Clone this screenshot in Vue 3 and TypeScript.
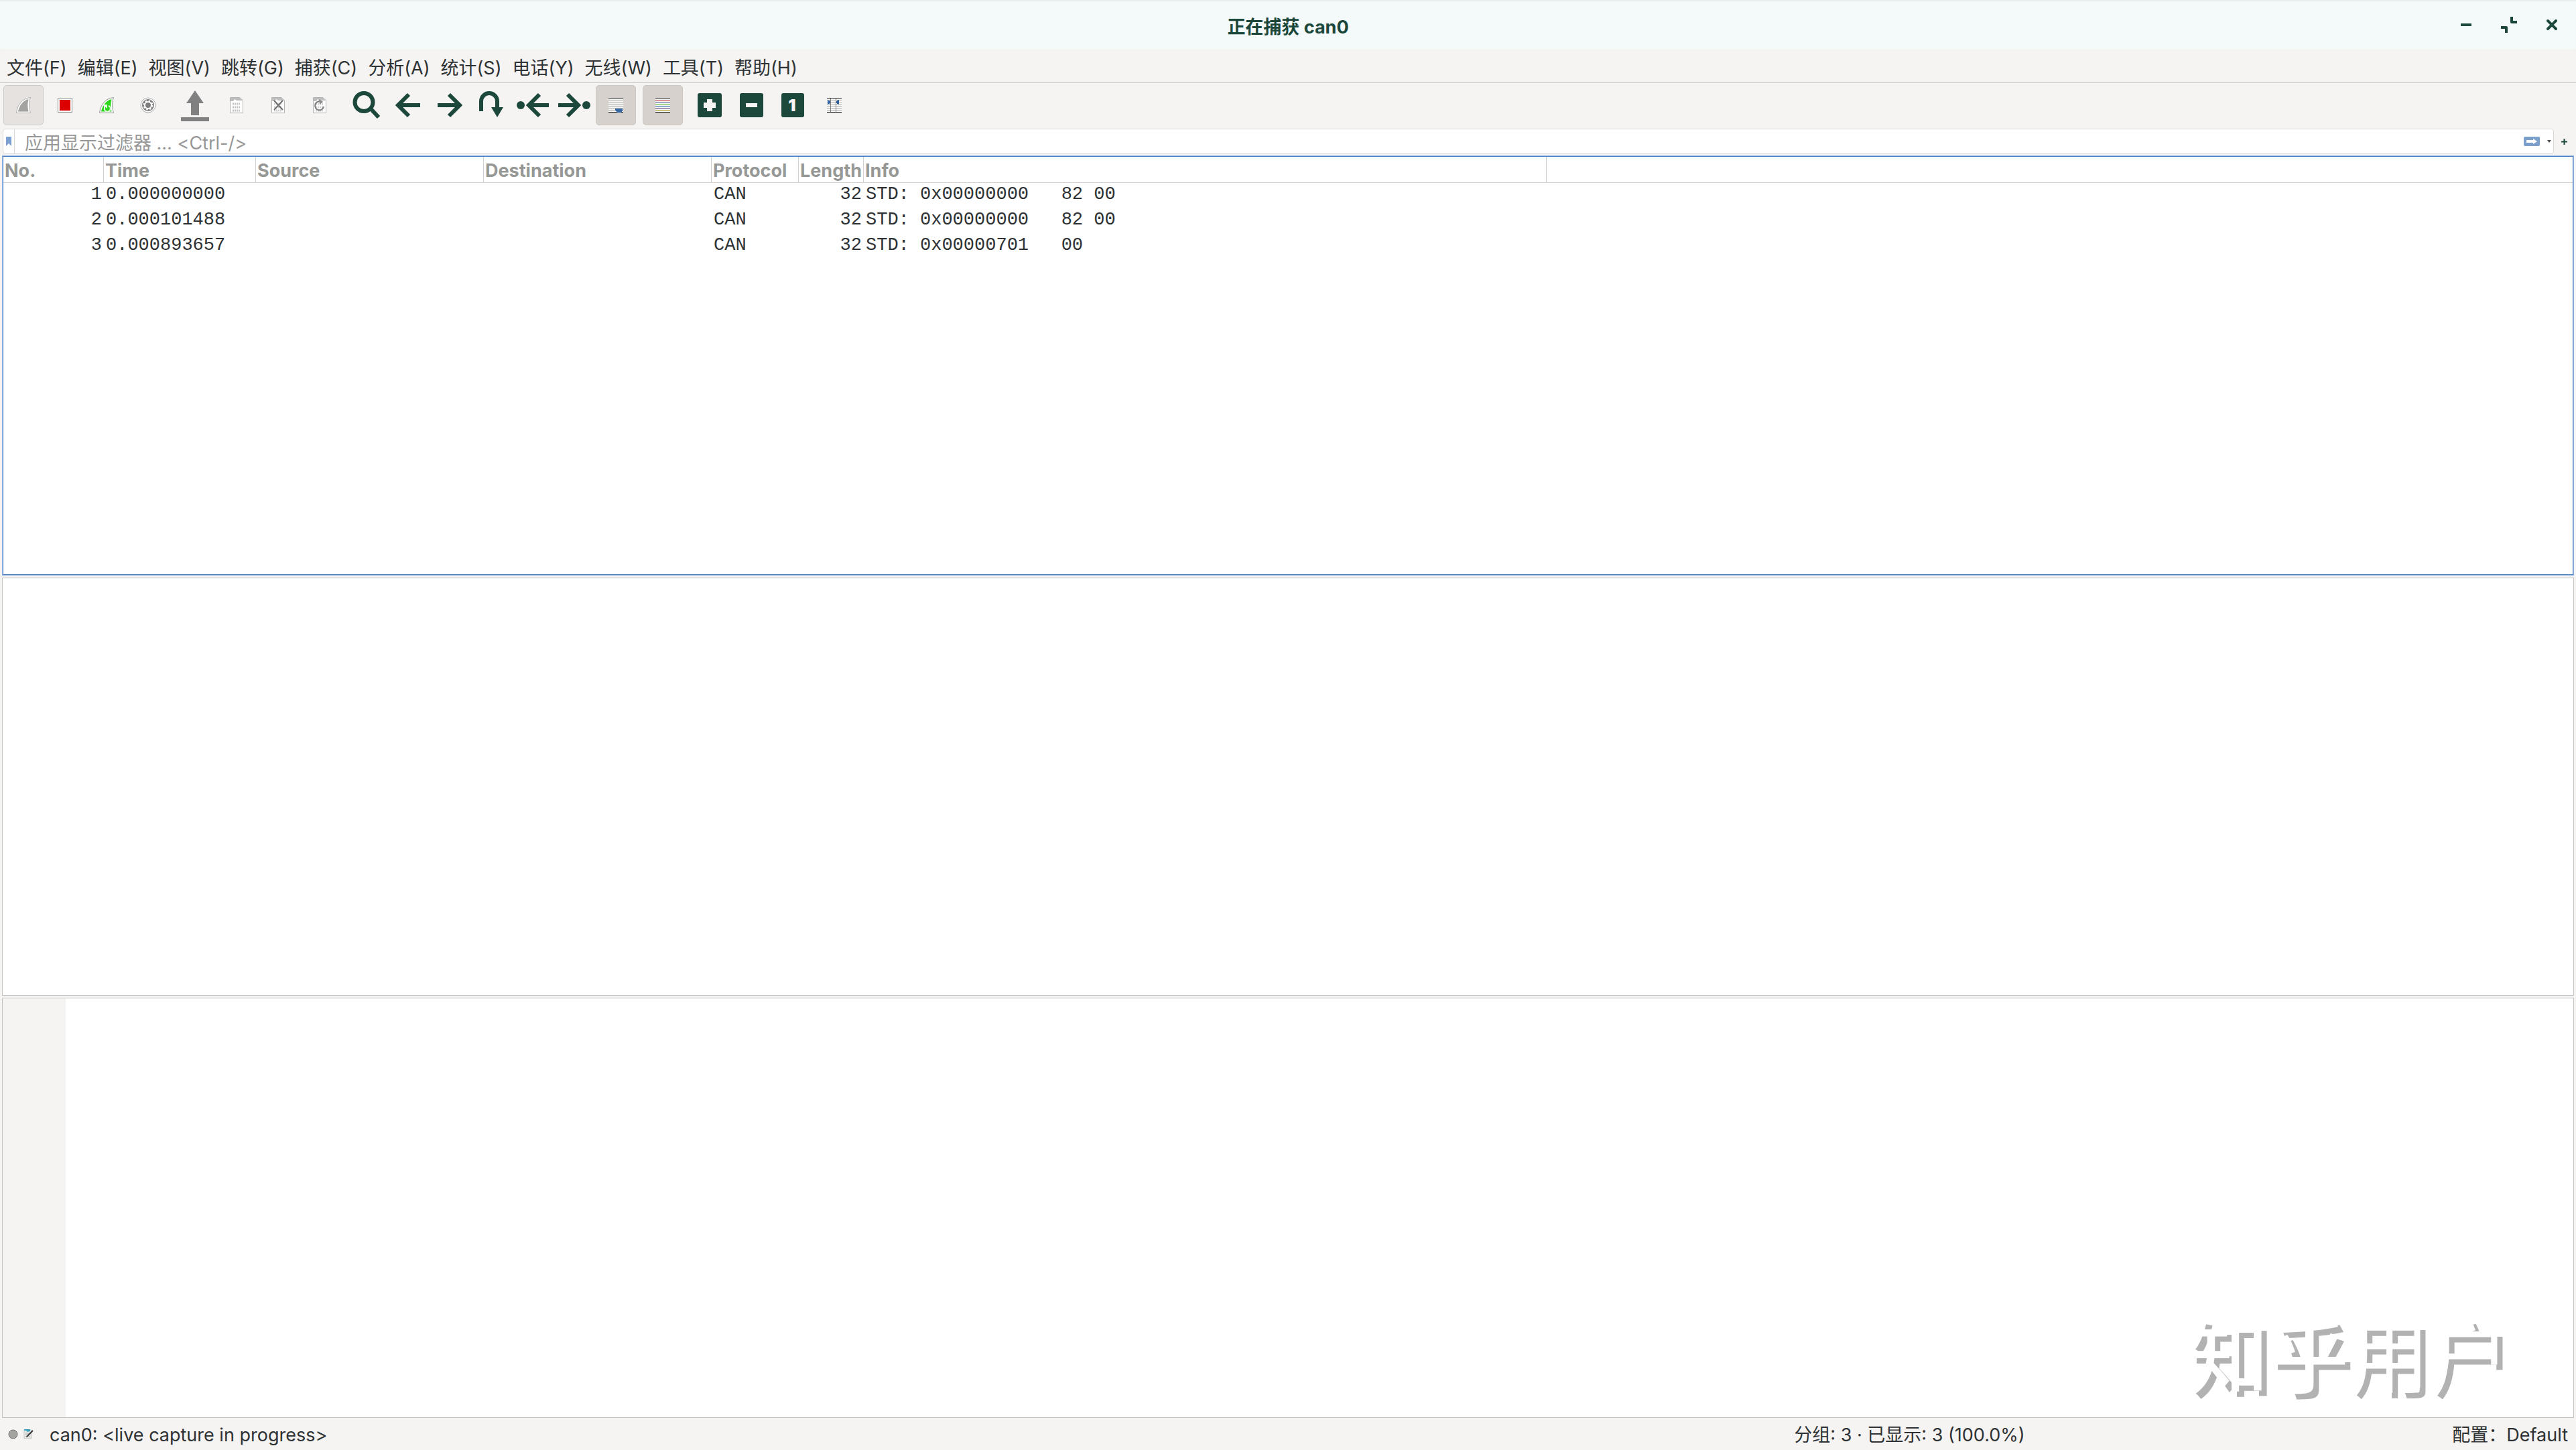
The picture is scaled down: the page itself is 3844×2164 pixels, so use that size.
<script setup lang="ts">
import { ref } from 'vue'

interface Packet {
  no: number
  time: string
  source: string
  destination: string
  protocol: string
  length: number
  info: string
}

const menus: string[] = [
  '文件(F)', '编辑(E)', '视图(V)', '跳转(G)', '捕获(C)', '分析(A)',
  '统计(S)', '电话(Y)', '无线(W)', '工具(T)', '帮助(H)',
]

const packets: Packet[] = [
  { no: 1, time: '0.000000000', source: '', destination: '', protocol: 'CAN', length: 32, info: 'STD: 0x00000000   82 00' },
  { no: 2, time: '0.000101488', source: '', destination: '', protocol: 'CAN', length: 32, info: 'STD: 0x00000000   82 00' },
  { no: 3, time: '0.000893657', source: '', destination: '', protocol: 'CAN', length: 32, info: 'STD: 0x00000701   00' },
]

const rowLines: number[] = [22, 25, 28, 31, 34, 37]
const colorLines: string[] = ['#c8373a', '#5566a0', '#62c03c', '#3f6fb5', '#6b5488', '#b5a032']
const filter = ref('')
</script>

<template>
  <div class="app">
    <header class="titlebar">
      <h1 class="title">正在捕获 can0</h1>
      <div class="window-buttons">
        <button class="win" aria-label="最小化">
          <svg viewBox="0 0 24 24"><path d="M4 12h16" stroke="#1c473b" stroke-width="4" /></svg>
        </button>
        <button class="win" aria-label="还原">
          <svg viewBox="0 0 24 24"><path d="M16 0v8h8M0 16h8v8" fill="none" stroke="#1c473b" stroke-width="4" stroke-linejoin="round" /></svg>
        </button>
        <button class="win" aria-label="关闭">
          <svg viewBox="0 0 24 24"><path d="M6 6l12 12M18 6L6 18" stroke="#1c473b" stroke-width="4" stroke-linecap="round" /></svg>
        </button>
      </div>
    </header>

    <nav class="menubar">
      <button v-for="m in menus" :key="m" class="menu">{{ m }}</button>
    </nav>

    <div class="toolbar">
      <div class="group">
        <button class="tool started" aria-label="开始捕获">
          <svg viewBox="0 0 60 60">
            <path d="M19.500 41.500C21 29 28 20 40.500 18.500C38 25 38 33 40.500 41.500Z" fill="#fff" stroke="#b0b0ae" />
            <path d="M22 39.500C24 30 29 23.500 37.500 21C36 27 36 33 37.500 39.500Z" fill="#a3a3a1" />
          </svg>
        </button>
        <button class="tool" aria-label="停止捕获">
          <svg viewBox="0 0 60 60">
            <rect x="19.500" y="19.500" width="21" height="21" fill="#fff" stroke="#8b8f8d" />
            <rect x="22" y="22" width="16" height="16" fill="#dc0000" />
          </svg>
        </button>
        <button class="tool" aria-label="重新开始捕获">
          <svg viewBox="0 0 60 60">
            <path d="M19.500 41.500C21 29 28 20 40.500 18.500C38 25 38 33 40.500 41.500Z" fill="#fff" stroke="#8f9b8d" />
            <path d="M22 39.500C24 30 29 23.500 37.500 21C36 27 36 33 37.500 39.500Z" fill="#2bd61b" />
            <path d="M27 30v4a4.500 4.500 0 1 0 6-3" fill="none" stroke="#e9fbe6" stroke-width="2" />
            <path d="M24 29h7v6z" fill="#e9fbe6" />
          </svg>
        </button>
        <button class="tool" aria-label="捕获选项">
          <svg viewBox="0 0 60 60">
            <circle cx="30" cy="30" r="11" fill="#fff" stroke="#a8a8a8" />
            <circle cx="30" cy="30" r="9" fill="#7d7d7d" />
            <circle cx="30" cy="30" r="5" fill="#7d7d7d" stroke="#fff" stroke-width="2" />
            <circle cx="30" cy="30" r="6.500" fill="none" stroke="#fff" stroke-width="2" stroke-dasharray="2.500 2.600" />
          </svg>
        </button>
      </div>
      <div class="group">
        <button class="tool" aria-label="打开">
          <svg viewBox="0 0 60 60"><path d="M30 8L43 27H36V45H24V27H17ZM9 48H51V54H9Z" fill="#808080" /></svg>
        </button>
        <button class="tool" aria-label="保存">
          <svg viewBox="0 0 60 60">
            <path d="M20.500 18.500H35L39.500 23V41.500H20.500Z" fill="#fff" stroke="#b4b4b4" />
            <path d="M21 19H35V23H30L27 21L25 24H21ZM35 19V23H39Z" fill="#bdbdbd" />
            <path d="M24 28H36M24 33H36M24 38H36" stroke="#c4c4c4" stroke-width="3" stroke-dasharray="2 1" />
          </svg>
        </button>
        <button class="tool" aria-label="关闭文件">
          <svg viewBox="0 0 60 60">
            <path d="M20.500 18.500H35L39.500 23V41.500H20.500Z" fill="#fff" stroke="#b4b4b4" />
            <path d="M21 19H35V23H30L27 21L25 24H21ZM35 19V23H39Z" fill="#bdbdbd" />
            <path d="M24 28H36M24 33H36M24 38H36" stroke="#d0d0d0" stroke-width="3" stroke-dasharray="2 1" />
            <path d="M24 23L37 37M37 23L24 37" stroke="#6e6e6e" stroke-width="2" />
          </svg>
        </button>
        <button class="tool" aria-label="重新加载">
          <svg viewBox="0 0 60 60">
            <path d="M20.500 18.500H35L39.500 23V41.500H20.500Z" fill="#fff" stroke="#b4b4b4" />
            <path d="M21 19H35V23H30L27 21L25 24H21ZM35 19V23H39Z" fill="#bdbdbd" />
            <path d="M24 28H36M24 33H36M24 38H36" stroke="#d0d0d0" stroke-width="3" stroke-dasharray="2 1" />
            <path d="M31 24.500A6.500 6.500 0 1 0 36 32" fill="none" stroke="#7c7c7c" stroke-width="2" />
            <path d="M29 21L35 25L30 29Z" fill="#8c8c8c" />
          </svg>
        </button>
      </div>
      <div class="group">
        <button class="tool" aria-label="查找">
          <svg viewBox="0 0 60 60" fill="none" stroke="#1c473b" stroke-width="6">
            <circle cx="26" cy="25.500" r="13.500" /><path d="M35 34L48 48" />
          </svg>
        </button>
        <button class="tool" aria-label="后退">
          <svg viewBox="0 0 60 60" fill="none" stroke="#1c473b" stroke-width="6"><path d="M48 30H16M31 14L15 30L31 46" /></svg>
        </button>
        <button class="tool" aria-label="前进">
          <svg viewBox="0 0 60 60" fill="none" stroke="#1c473b" stroke-width="6"><path d="M12 30H44M29 14L45 30L29 46" /></svg>
        </button>
        <button class="tool" aria-label="跳转到分组">
          <svg viewBox="0 0 60 60">
            <path d="M15 39V24A12 12 0 0 1 39 24V36" fill="none" stroke="#1c473b" stroke-width="6" />
            <path d="M30 33H48L39 48Z" fill="#1c473b" />
          </svg>
        </button>
        <button class="tool" aria-label="首个分组">
          <svg viewBox="0 0 60 60" fill="none" stroke="#1c473b" stroke-width="6">
            <path d="M54 30H26M40 14L24 30L40 46" /><circle cx="12" cy="30" r="6" fill="#1c473b" stroke="none" />
          </svg>
        </button>
        <button class="tool" aria-label="最后分组">
          <svg viewBox="0 0 60 60" fill="none" stroke="#1c473b" stroke-width="6">
            <path d="M6 30H34M20 14L36 30L20 46" /><circle cx="48" cy="30" r="6" fill="#1c473b" stroke="none" />
          </svg>
        </button>
        <button class="tool checked" aria-label="自动滚动">
          <svg viewBox="0 0 60 60" shape-rendering="crispEdges">
            <rect x="19" y="19" width="22" height="22" fill="#f4f4f2" />
            <rect v-for="y in rowLines" :key="y" x="19" :y="y" width="22" height="1" fill="#b4b6b2" />
            <path d="M19 19H41V20H19ZM19 40H41V41H19Z" fill="#1f1f1f" />
            <path d="M29 35H40V38L37 41H32L29 38Z" fill="#3465a4" />
          </svg>
        </button>
      </div>
      <div class="group">
        <button class="tool checked" aria-label="着色分组列表">
          <svg viewBox="0 0 60 60" shape-rendering="crispEdges">
            <rect x="19" y="19" width="22" height="22" fill="#f4f4f2" />
            <rect v-for="(c, i) in colorLines" :key="i" x="19" :y="22 + i * 3" width="22" height="1" :fill="c" />
            <path d="M19 19H41V20H19ZM19 40H41V41H19Z" fill="#1f1f1f" />
          </svg>
        </button>
      </div>
      <div class="group">
        <button class="tool" aria-label="放大">
          <svg viewBox="0 0 60 60">
            <rect x="12" y="12" width="36" height="36" rx="3" fill="#1c473b" />
            <path d="M26 21H34V26H39V34H34V39H26V34H21V26H26Z" fill="#f6f5f4" />
          </svg>
        </button>
        <button class="tool" aria-label="缩小">
          <svg viewBox="0 0 60 60">
            <rect x="13" y="12" width="35" height="36" rx="3" fill="#1c473b" />
            <rect x="22" y="27" width="17" height="6" fill="#f6f5f4" />
          </svg>
        </button>
        <button class="tool" aria-label="普通大小">
          <svg viewBox="0 0 60 60">
            <rect x="13" y="12" width="34" height="36" rx="3" fill="#1c473b" />
            <text x="29" y="39" class="one" text-anchor="middle">1</text>
          </svg>
        </button>
        <button class="tool" aria-label="调整列宽">
          <svg viewBox="0 0 60 60" shape-rendering="crispEdges">
            <rect x="19" y="19" width="22" height="22" fill="#f8f8f8" />
            <rect v-for="y in rowLines" :key="y" x="19" :y="y" width="22" height="1" fill="#b4b6b2" />
            <path d="M24 20H25V40H24ZM32 20H33V40H32Z" fill="#7c7e7b" />
            <path d="M19 19H41V20H19ZM19 40H41V41H19Z" fill="#1f1f1f" />
            <path d="M20 22L24 24V27L20 29ZM37 22L33 24V27L37 29Z" fill="#3465a4" />
          </svg>
        </button>
      </div>
    </div>

    <div class="filterbar">
      <div class="filterbox">
        <button class="bookmark" aria-label="管理过滤器书签">
          <svg width="8" height="14" viewBox="0 0 8 14"><path d="M0 0H8V14L4 10L0 14Z" fill="#7b9fd2" /></svg>
        </button>
        <input v-model="filter" class="filter" aria-label="显示过滤器" placeholder="应用显示过滤器 … <Ctrl-/>" />
        <button class="apply" aria-label="应用过滤器">
          <svg width="24" height="14" viewBox="0 0 24 14">
            <rect width="24" height="14" rx="2" fill="#7b9fcb" />
            <path d="M4 5H14V3L20 7L14 11V9H4Z" fill="#fff" />
          </svg>
        </button>
        <button class="recent" aria-label="最近的过滤器">
          <svg width="6" height="4" viewBox="0 0 6 4"><path d="M0 0H6L3 4Z" fill="#4a4a4a" /></svg>
        </button>
      </div>
      <button class="add" aria-label="添加过滤器按钮">
        <svg width="9" height="9" viewBox="0 0 9 9"><path d="M4.500 0V9M0 4.500H9" stroke="#1c473b" stroke-width="2" /></svg>
      </button>
    </div>

    <main class="panes">
      <section class="pane list">
        <table class="packets">
          <colgroup>
            <col class="c-no" /><col class="c-time" /><col class="c-addr" /><col class="c-addr" />
            <col class="c-proto" /><col class="c-len" /><col class="c-info" />
          </colgroup>
          <thead>
            <tr>
              <th>No.</th><th>Time</th><th>Source</th><th>Destination</th>
              <th>Protocol</th><th>Length</th><th>Info</th>
            </tr>
          </thead>
          <tbody>
            <tr v-for="p in packets" :key="p.no">
              <td class="num">{{ p.no }}</td>
              <td>{{ p.time }}</td>
              <td>{{ p.source }}</td>
              <td>{{ p.destination }}</td>
              <td>{{ p.protocol }}</td>
              <td class="num">{{ p.length }}</td>
              <td>{{ p.info }}</td>
            </tr>
          </tbody>
        </table>
        <div class="header-rest"></div>
      </section>
      <section class="pane details"></section>
      <section class="pane bytes">
        <div class="offsets"></div>
        <div class="watermark"><b>知乎</b>用户</div>
      </section>
    </main>

    <footer class="statusbar">
      <div class="status-left">
        <button class="mini" aria-label="专家信息">
          <svg width="15" height="15" viewBox="0 0 15 15"><circle cx="7.500" cy="7.500" r="6.500" fill="#a3a3a0" stroke="#6f706d" /></svg>
        </button>
        <button class="mini" aria-label="捕获文件注释">
          <svg width="15" height="15" viewBox="0 0 15 15">
            <path d="M1 1H12V14H1Z" fill="#e6e8e6" stroke="#c4c6c4" />
            <path d="M1 0H10V3L6 4L4 2H1Z" fill="#3aa3c4" />
            <path d="M3 6H8M3 8H6M3 11H10" stroke="#b0b3b0" />
            <path d="M14 2L6 10" stroke="#333" stroke-width="2" />
            <path d="M4 12L5 9L7 11Z" fill="#333" />
          </svg>
        </button>
        <span class="capture">can0: &lt;live capture in progress&gt;</span>
      </div>
      <span>分组: 3 · 已显示: 3 (100.0%)</span>
      <button class="profile">配置：Default</button>
    </footer>
  </div>
</template>

<style>
body {
  margin: 0;
}
</style>

<style scoped>
.app {
  display: flex;
  flex-direction: column;
  height: 100vh;
  box-sizing: border-box;
  background: #f5f4f3;
  color: #2e3234;
  font: 27px/36px Inter, "Noto Sans CJK SC", sans-serif;
}
button {
  margin: 0;
  padding: 0;
  border: 0;
  background: none;
  color: inherit;
  font: inherit;
  display: flex;
  align-items: center;
  justify-content: center;
}
svg {
  display: block;
}
.titlebar {
  display: grid;
  grid-template-columns: 1fr auto 1fr;
  align-items: center;
  height: 73px;
  padding: 0 4px;
  background: #f4f9fa;
  box-shadow: inset 0 2px 1px #e9eeef;
}
.title {
  grid-column: 2;
  margin: 0;
  padding-top: 8px;
  font-size: 27px;
  font-weight: 700;
  color: #1c473b;
}
.window-buttons {
  display: flex;
  justify-content: flex-end;
}
.win {
  width: 64px;
  height: 64px;
}
.win svg {
  width: 24px;
  height: 24px;
}
.menubar {
  display: flex;
  gap: 16px;
  height: 50px;
  padding-left: 10px;
  border-bottom: 1px solid #c9c7c4;
  align-items: center;
}
.menu {
  padding-top: 8px;
  white-space: nowrap;
}
.toolbar {
  display: flex;
  gap: 10px;
  padding: 3px 5px 5px;
}
.group {
  display: flex;
  gap: 2px;
}
.tool {
  box-sizing: border-box;
  width: 60px;
  height: 60px;
  border-radius: 5px;
}
.tool svg {
  width: 60px;
  height: 60px;
  flex: none;
}
.started {
  background: #e5e2e0;
  border: 1px solid #cdc9c6;
}
.checked {
  background: #d6d1cd;
  border: 1px solid #cdc7c2;
}
.one {
  font: 900 25px Inter, sans-serif;
  fill: #f6f5f4;
}
.filterbar {
  display: flex;
  align-items: stretch;
  height: 38px;
  padding: 0 0 2px 4px;
}
.filterbox {
  flex: 1;
  display: flex;
  box-sizing: border-box;
  border: 1px solid #dbd9d7;
  border-radius: 4px;
  background: #fff;
}
.bookmark {
  width: 17px;
  border-right: 1px solid #dbd9d7;
}
.filter {
  flex: 1;
  min-width: 0;
  padding: 5px 0 0 15px;
  border: 0;
  outline: 0;
  background: none;
  color: #2e3234;
  font: inherit;
}
.filter::placeholder {
  color: #979797;
  opacity: 1;
}
.apply {
  width: 40px;
}
.recent {
  width: 12px;
}
.add {
  width: 33px;
  padding-right: 2px;
}
.panes {
  flex: 1;
  display: flex;
  flex-direction: column;
  gap: 3px;
  min-height: 0;
  padding: 0 3px;
}
.pane {
  box-sizing: border-box;
  min-height: 0;
  border: 1px solid #c6c4c1;
  background: #fff;
}
.list {
  position: relative;
  flex: 313;
  padding: 1px;
  border-color: #93b5e4;
  box-shadow: inset 0 0 0 1px #4a7dc0;
}
.details {
  flex: 312;
}
.packets {
  table-layout: fixed;
  width: 2303px;
  border-collapse: separate;
  border-spacing: 0;
}
.c-no { width: 150px; }
.c-time { width: 227px; }
.c-addr { width: 340px; }
.c-proto { width: 130px; }
.c-len { width: 97px; }
.packets th {
  box-sizing: border-box;
  height: 39px;
  padding: 2px 0 0 2px;
  border-right: 1px solid #d4d2d0;
  text-align: left;
  font-weight: 700;
  color: #969896;
  line-height: 34px;
}
.header-rest {
  position: absolute;
  left: 1px;
  right: 1px;
  top: 39px;
  border-top: 1px solid #d4d2d0;
}
.packets td {
  height: 38px;
  padding: 0 0 0 3px;
  vertical-align: top;
  font: 27px/34px "Liberation Mono", monospace;
  white-space: pre;
}
.packets .num {
  padding: 0 3px 0 0;
  text-align: right;
}
.bytes {
  flex: 314;
  display: flex;
  justify-content: space-between;
  align-items: flex-end;
}
.offsets {
  align-self: stretch;
  width: 94px;
  background: #f5f4f3;
}
.watermark {
  padding: 0 95px 32px 0;
  font: 400 120px/130px "Noto Sans CJK SC", sans-serif;
  color: #fff;
  text-shadow: 8px 8px 0 #b2b2b2;
}
.watermark b {
  font-weight: 500;
}
.statusbar {
  display: grid;
  grid-template-columns: 19fr 7fr auto;
  align-items: center;
  height: 48px;
  padding: 0 12px;
}
.status-left {
  display: flex;
  align-items: center;
}
.mini {
  width: 15px;
  height: 30px;
  margin-right: 8px;
}
.capture {
  padding-left: 16px;
}
.statusbar > span,
.capture,
.profile {
  padding-top: 4px;
}
</style>
